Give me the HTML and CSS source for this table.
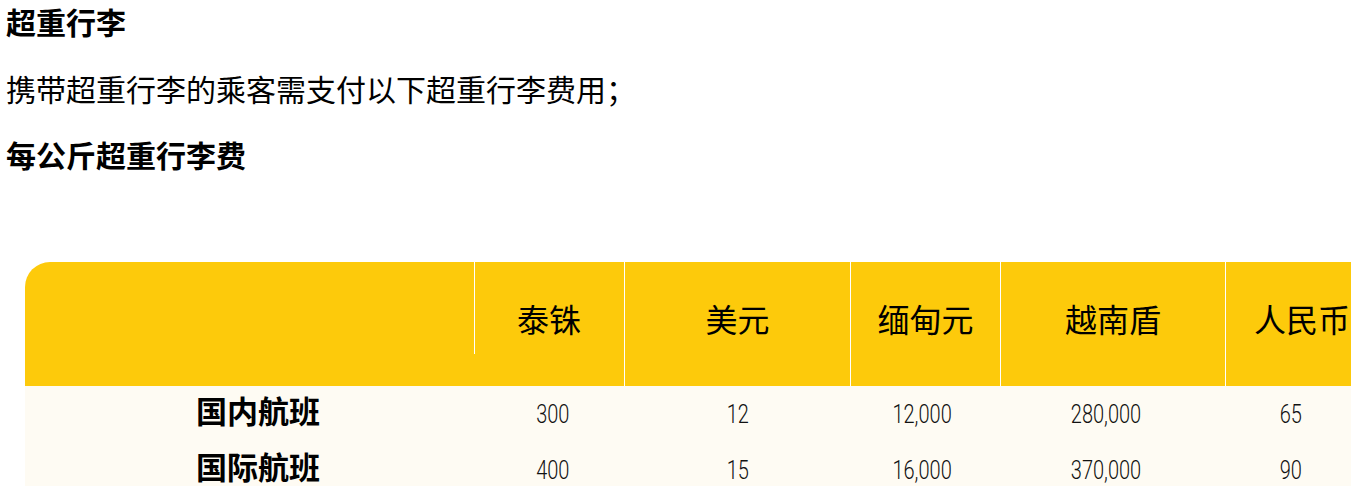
FILE: index.html
```html
<!DOCTYPE html>
<html lang="zh-CN">
<head>
<meta charset="utf-8">
<title>超重行李</title>
<link rel="stylesheet" href="styles.css">
</head>
<body>
<h1 class="title">超重行李</h1>
<p class="intro">携带超重行李的乘客需支付以下超重行李费用；</p>
<h2 class="subtitle">每公斤超重行李费</h2>
<div class="fees">
  <div class="fees-head">
    <div class="hcell corner"></div>
    <div class="hcell first-cur">泰铢</div>
    <div class="hcell cur">美元</div>
    <div class="hcell cur">缅甸元</div>
    <div class="hcell cur">越南盾</div>
    <div class="hcell cur last">人民币</div>
  </div>
  <div class="fees-body">
    <div class="label">国内航班</div>
    <div class="num"><span>300</span></div>
    <div class="num"><span>12</span></div>
    <div class="num"><span>12,000</span></div>
    <div class="num"><span>280,000</span></div>
    <div class="num"><span>65</span></div>
    <div class="label">国际航班</div>
    <div class="num"><span>400</span></div>
    <div class="num"><span>15</span></div>
    <div class="num"><span>16,000</span></div>
    <div class="num"><span>370,000</span></div>
    <div class="num"><span>90</span></div>
  </div>
</div>
</body>
</html>
```
FILE: styles.css
```css
html, body {
  margin: 0;
  overflow: hidden;
  background: #ffffff;
}
body {
  padding: 0 6px;
  font-family: "Noto Sans CJK SC", "Noto Sans", sans-serif;
  color: #000;
}
.title {
  margin: 0;
  font-size: 30px;
  line-height: 42px;
  font-weight: 700;
}
.intro {
  margin: 26px 0 0;
  font-size: 30px;
  line-height: 40px;
  font-weight: 400;
}
.subtitle {
  margin: 25px 0 0;
  font-size: 30px;
  line-height: 42px;
  font-weight: 700;
}
.fees {
  margin: 87px 0 0 19px;
  width: 1360px;
}
.fees-head {
  display: grid;
  grid-template-columns: 449px 150px 226px 150px 225px 160px;
  height: 124px;
  background: #fdca0b;
  border-top-left-radius: 25px;
}
.hcell {
  display: flex;
  align-items: center;
  justify-content: center;
  padding-bottom: 12px;
  font-size: 32px;
  line-height: 40px;
  font-weight: 400;
}
.hcell.last {
  justify-content: flex-start;
  padding-left: 28px;
}
.first-cur {
  background: linear-gradient(#ffffff, #ffffff) no-repeat left top / 1px 92px;
}
.cur {
  border-left: 1px solid #ffffff;
}
.fees-body {
  display: grid;
  grid-template-columns: 436px repeat(5, 184.4px);
  grid-auto-rows: 56px;
  background: #fefbf3;
}
.label {
  display: flex;
  align-items: center;
  justify-content: center;
  padding-left: 30px;
  padding-bottom: 8px;
  font-size: 31px;
  font-weight: 700;
  line-height: 40px;
}
.num {
  display: flex;
  align-items: center;
  justify-content: center;
  font-family: "Roboto", "DejaVu Sans Condensed", sans-serif;
  font-weight: 300;
  font-size: 25px;
  color: #111;
}
.num span {
  display: inline-block;
  transform: scaleX(0.8);
}
```
